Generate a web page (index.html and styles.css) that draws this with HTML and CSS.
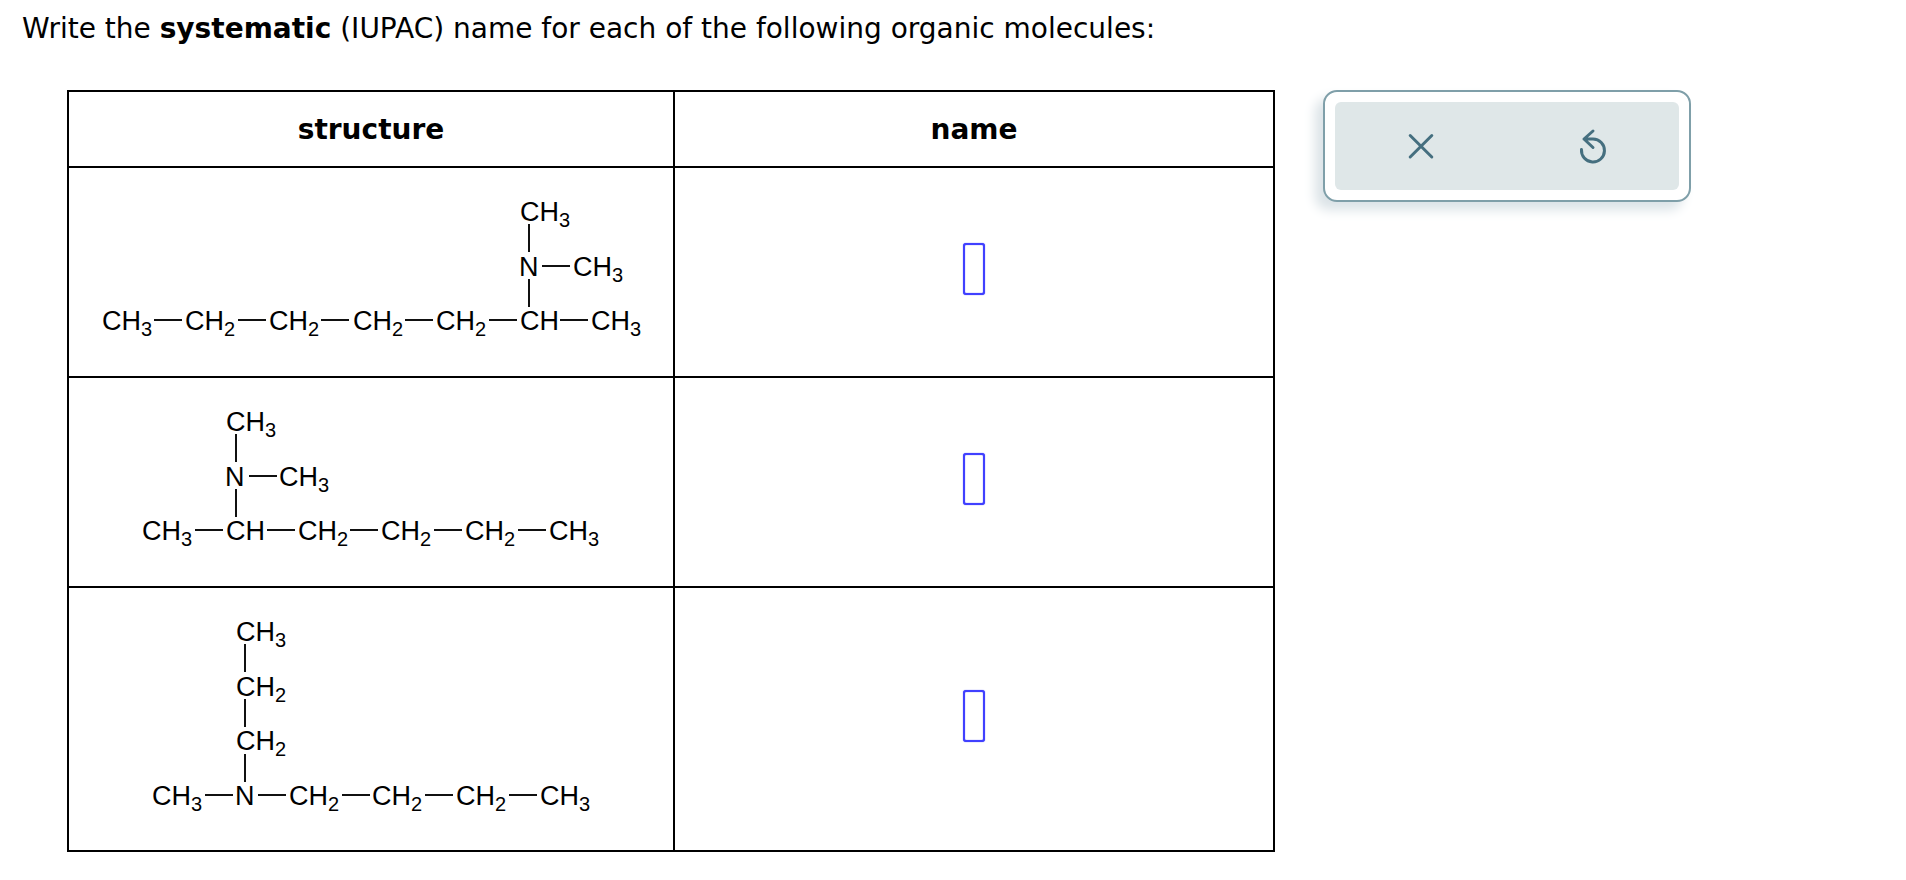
FILE: index.html
```html
<!DOCTYPE html>
<html lang="en">
<head>
    <meta charset="UTF-8">
    <meta name="viewport" content="width=device-width, initial-scale=1.0">
    <title>Naming organic molecules</title>
    <link rel="stylesheet" href="styles.css">
</head>
<body>
    <p class="question">Write the <b>systematic</b> (IUPAC) name for each of the following organic molecules:</p>

    <main class="exercise">
        <table class="answer-table">
            <thead>
                <tr>
                    <th class="structure-col" scope="col">structure</th>
                    <th scope="col">name</th>
                </tr>
            </thead>
            <tbody>
                <tr>
                    <td>
                        <svg class="molecule" width="544" height="168" viewBox="0 0 544 168">
                            <!-- Branch -->
                            <text x="421" y="33">CH<tspan class="sub" dy="6">3</tspan></text>
                            <text x="420" y="88">N</text>
                            <text x="474" y="88">CH<tspan class="sub" dy="6">3</tspan></text>
                            <path class="bond" d="M430 36V64M430 91V119M443 78H471"/>
                            <!-- Main chain -->
                            <text x="3" y="142">CH<tspan class="sub" dy="6">3</tspan></text>
                            <text x="86" y="142">CH<tspan class="sub" dy="6">2</tspan></text>
                            <text x="170" y="142">CH<tspan class="sub" dy="6">2</tspan></text>
                            <text x="254" y="142">CH<tspan class="sub" dy="6">2</tspan></text>
                            <text x="337" y="142">CH<tspan class="sub" dy="6">2</tspan></text>
                            <text x="421" y="142">CH</text>
                            <text x="492" y="142">CH<tspan class="sub" dy="6">3</tspan></text>
                            <path class="bond" d="M55 132H83M139 132H167M222 132H250M306 132H334M390 132H418M461 132H489"/>
                        </svg>
                    </td>
                    <td class="name-cell"><input class="name-input" type="text" aria-label="Name of molecule 1"></td>
                </tr>
                <tr>
                    <td>
                        <svg class="molecule" width="544" height="168" viewBox="0 0 544 168">
                            <!-- Branch -->
                            <text x="127" y="33">CH<tspan class="sub" dy="6">3</tspan></text>
                            <text x="126" y="88">N</text>
                            <text x="180" y="88">CH<tspan class="sub" dy="6">3</tspan></text>
                            <path class="bond" d="M137 36V64M137 91V119M150 78H178"/>
                            <!-- Main chain -->
                            <text x="43" y="142">CH<tspan class="sub" dy="6">3</tspan></text>
                            <text x="127" y="142">CH</text>
                            <text x="199" y="142">CH<tspan class="sub" dy="6">2</tspan></text>
                            <text x="282" y="142">CH<tspan class="sub" dy="6">2</tspan></text>
                            <text x="366" y="142">CH<tspan class="sub" dy="6">2</tspan></text>
                            <text x="450" y="142">CH<tspan class="sub" dy="6">3</tspan></text>
                            <path class="bond" d="M96 132H124M168 132H196M251 132H279M335 132H363M419 132H447"/>
                        </svg>
                    </td>
                    <td class="name-cell"><input class="name-input" type="text" aria-label="Name of molecule 2"></td>
                </tr>
                <tr>
                    <td>
                        <svg class="molecule" width="544" height="222" viewBox="0 0 544 222">
                            <!-- Branch -->
                            <text x="137" y="33">CH<tspan class="sub" dy="6">3</tspan></text>
                            <text x="137" y="88">CH<tspan class="sub" dy="6">2</tspan></text>
                            <text x="137" y="142">CH<tspan class="sub" dy="6">2</tspan></text>
                            <path class="bond" d="M146 36V64M146 91V119M146 146V174"/>
                            <!-- Main chain -->
                            <text x="53" y="197">CH<tspan class="sub" dy="6">3</tspan></text>
                            <text x="136" y="197">N</text>
                            <text x="190" y="197">CH<tspan class="sub" dy="6">2</tspan></text>
                            <text x="273" y="197">CH<tspan class="sub" dy="6">2</tspan></text>
                            <text x="357" y="197">CH<tspan class="sub" dy="6">2</tspan></text>
                            <text x="441" y="197">CH<tspan class="sub" dy="6">3</tspan></text>
                            <path class="bond" d="M106 187H134M159 187H187M243 187H271M326 187H354M410 187H438"/>
                        </svg>
                    </td>
                    <td class="name-cell"><input class="name-input" type="text" aria-label="Name of molecule 3"></td>
                </tr>
            </tbody>
        </table>

        <!-- Clear and undo buttons -->
        <div class="toolbox">
            <div class="toolbox-inner">
                <button class="tool-btn" type="button" aria-label="Clear">
                    <svg class="tool-icon" viewBox="0 0 36 36"><path d="M7.200 7.500L28.800 29M28.800 7.500L7.200 29"/></svg>
                </button>
                <button class="tool-btn" type="button" aria-label="Undo">
                    <svg class="tool-icon" viewBox="0 0 36 36"><path d="M6.500 21.500A11.500 11.500 0 1 0 18 11H9M18 3L9 11L18 19.500"/></svg>
                </button>
            </div>
        </div>
    </main>
</body>
</html>
```
FILE: styles.css
```css
body {
    font-family: Verdana, "DejaVu Sans", sans-serif;
    font-size: 28px;
    line-height: 36px;
    color: #000;
    background-color: #fff;
    margin: 0;
    padding: 11px 0 0;
}
.question {
    margin: 0 22px 43px;
}
.exercise {
    display: flex;
    align-items: flex-start;
    gap: 48px;
    padding: 0 215px 28px 67px;
}
/* Table with the structures and their names */
.answer-table {
    flex: 1;
    box-sizing: border-box;
    border-collapse: collapse;
    table-layout: fixed;
}
.answer-table th,
.answer-table td {
    border: 2px solid #000;
    padding: 20px 0;
    text-align: center;
    vertical-align: middle;
}
.answer-table th {
    padding: 20px 0 18px;
}
.answer-table .structure-col {
    width: 50.25%;
}
/* Molecule drawings */
.molecule {
    display: block;
    margin: 0 auto;
    font-family: Arial, "Liberation Sans", sans-serif;
    font-size: 27px;
}
.sub {
    font-size: 20px;
}
.bond {
    fill: none;
    stroke: #111;
    stroke-width: 2;
}
/* Name boxes */
.answer-table .name-cell {
    padding: 0 0 6px;
}
.name-input {
    display: block;
    box-sizing: border-box;
    width: 22px;
    height: 52px;
    margin: 0 auto;
    padding: 0;
    border: 2px solid #4040ff;
    border-radius: 3px;
    box-shadow: 0 0 1px #4040ff, inset 0 0 1px #4040ff;
    background-color: #fff;
    font: inherit;
    outline: none;
}
/* Toolbox */
.toolbox {
    box-sizing: border-box;
    width: 368px;
    padding: 10px;
    border: 2px solid #7f9fa9;
    border-radius: 14px;
    background-color: #fff;
    box-shadow: -8px 8px 12px #dbe3e7;
}
.toolbox-inner {
    display: flex;
    height: 88px;
    border-radius: 6px;
    background-color: #dfe7e8;
}
.tool-btn {
    display: flex;
    flex: 1;
    align-items: center;
    justify-content: center;
    padding: 0;
    border: none;
    background: none;
    cursor: pointer;
}
.tool-icon {
    width: 36px;
    height: 36px;
    fill: none;
    stroke: #456f7f;
    stroke-width: 3;
    stroke-linecap: round;
    stroke-linejoin: round;
}
```
